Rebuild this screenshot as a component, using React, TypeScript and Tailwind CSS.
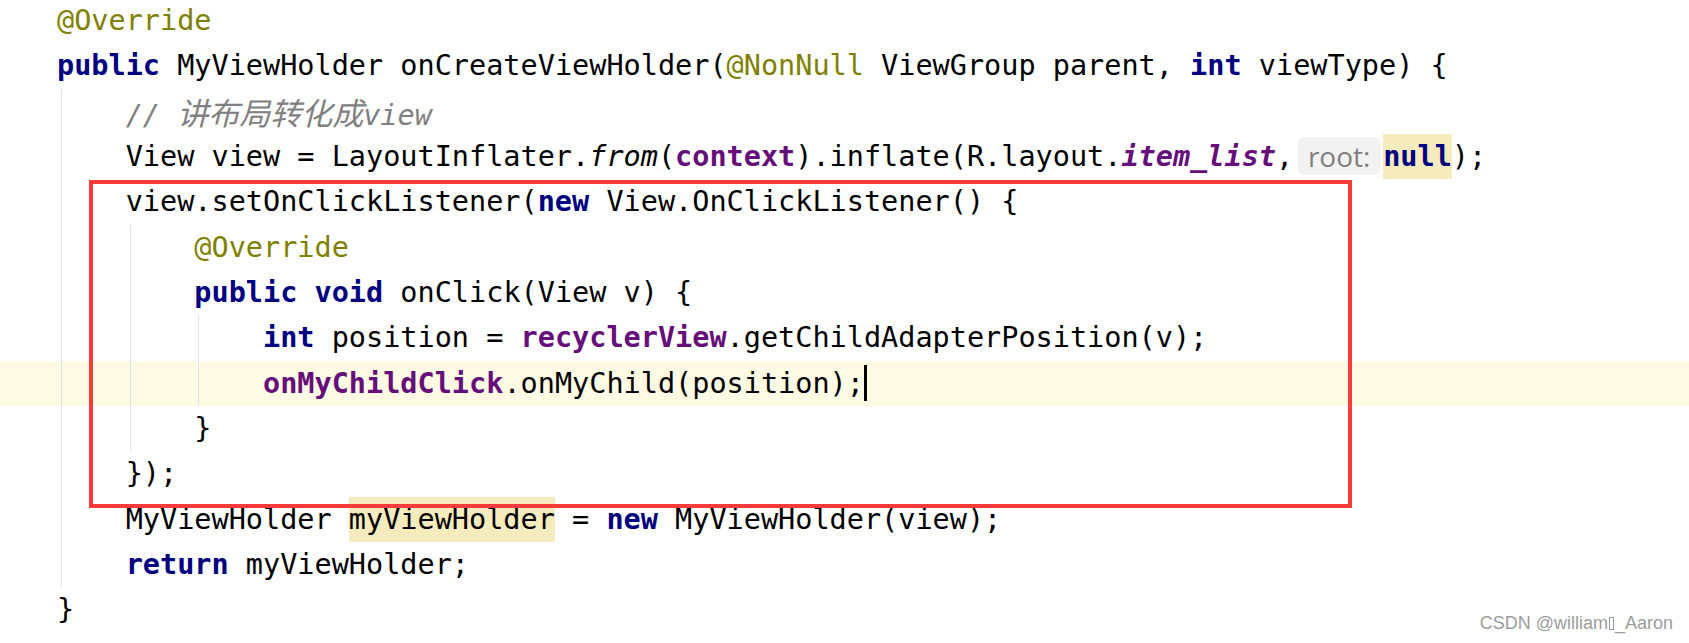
import React from "react";

const K = ({ c }: { c: string }) => <span className="font-bold text-[#000080]">{c}</span>;
const A = ({ c }: { c: string }) => <span className="text-[#808000]">{c}</span>;
const F = ({ c }: { c: string }) => <span className="font-bold text-[#660e7a]">{c}</span>;
const HL = ({ children }: { children: React.ReactNode }) => (
  <span className="inline-block align-top h-[45.33px] bg-[#f6ebbc]">{children}</span>
);

const Line = ({ children, current }: { children?: React.ReactNode; current?: boolean }) => (
  <div
    className={
      "h-[45.33px] leading-[45.33px] whitespace-pre pl-[57px] " + (current ? "bg-[#fffae3]" : "")
    }
  >
    {children}
  </div>
);

export default function App() {
  return (
    <div className="relative w-[1689px] h-[643px] overflow-hidden bg-white">
      <div
        className="-mt-[2px] text-[28.52px] text-black"
        style={{ fontFamily: '"DejaVu Sans Mono", "Noto Sans CJK SC", monospace' }}
      >
        <Line>
          <A c="@Override" />
        </Line>
        <Line>
          <K c="public" /> MyViewHolder onCreateViewHolder(<A c="@NonNull" /> ViewGroup parent, <K c="int" /> viewType) {"{"}
        </Line>
        <Line>
          <span className="italic text-[#808080]">
            {"    // "}
            <span className="text-[31px]" style={{ fontFamily: '"Noto Sans CJK SC", sans-serif' }}>
              讲布局转化成
            </span>
            view
          </span>
        </Line>
        <Line>
          {"    View view = LayoutInflater."}
          <span className="italic">from</span>(<F c="context" />).inflate(R.layout.
          <span className="italic font-bold text-[#660e7a]">item_list</span>
          {","}
          <span
            className="relative top-[3px] inline-block align-top h-[38px] w-[82px] rounded-[6px] bg-[#f2f2f2] text-center text-[28px] leading-[38px] text-[#7f7f7f] ml-[5px] mr-[3px]"
            style={{ fontFamily: '"Open Sans", sans-serif' }}
          >
            root:
          </span>
          <HL>
            <span className="font-bold text-[#000080]">null</span>
          </HL>
          );
        </Line>
        <Line>
          {"    view.setOnClickListener("}
          <K c="new" /> View.OnClickListener() {"{"}
        </Line>
        <Line>
          {"        "}
          <A c="@Override" />
        </Line>
        <Line>
          {"        "}
          <K c="public" /> <K c="void" /> onClick(View v) {"{"}
        </Line>
        <Line>
          {"            "}
          <K c="int" /> position = <F c="recyclerView" />.getChildAdapterPosition(v);
        </Line>
        <Line current>
          {"            "}
          <F c="onMyChildClick" />.onMyChild(position);
          <span className="relative top-[4px] inline-block align-top w-[3px] h-[36px] bg-black" />
        </Line>
        <Line>{"        }"}</Line>
        <Line>{"    });"}</Line>
        <Line>
          {"    MyViewHolder "}
          <HL>myViewHolder</HL>
          {" = "}
          <K c="new" /> MyViewHolder(view);
        </Line>
        <Line>
          {"    "}
          <K c="return" /> myViewHolder;
        </Line>
        <Line>{"}"}</Line>
      </div>

      {/* indent guides */}
      <div className="absolute left-[61px] top-[89px] h-[498px] w-[1px] bg-[#e2e2e2]" />
      <div className="absolute left-[130px] top-[225px] h-[226px] w-[1px] bg-[#e2e2e2]" />
      <div className="absolute left-[198px] top-[315px] h-[91px] w-[1px] bg-[#e2e2e2]" />

      {/* red annotation box */}
      <div className="absolute left-[89px] top-[180px] w-[1263px] h-[328px] border-[4px] border-[#f73a3a]" />

      {/* watermark */}
      <div
        className="absolute right-[16px] top-[614px] text-[18px] leading-none text-[#9c9c9c] whitespace-pre"
        style={{ fontFamily: '"Liberation Sans", Arial, sans-serif' }}
      >
        CSDN @william
        <span className="inline-block w-[5px] h-[13px] border border-[#9c9c9c] mx-[1px] align-[-1px]" />
        _Aaron
      </div>
    </div>
  );
}
